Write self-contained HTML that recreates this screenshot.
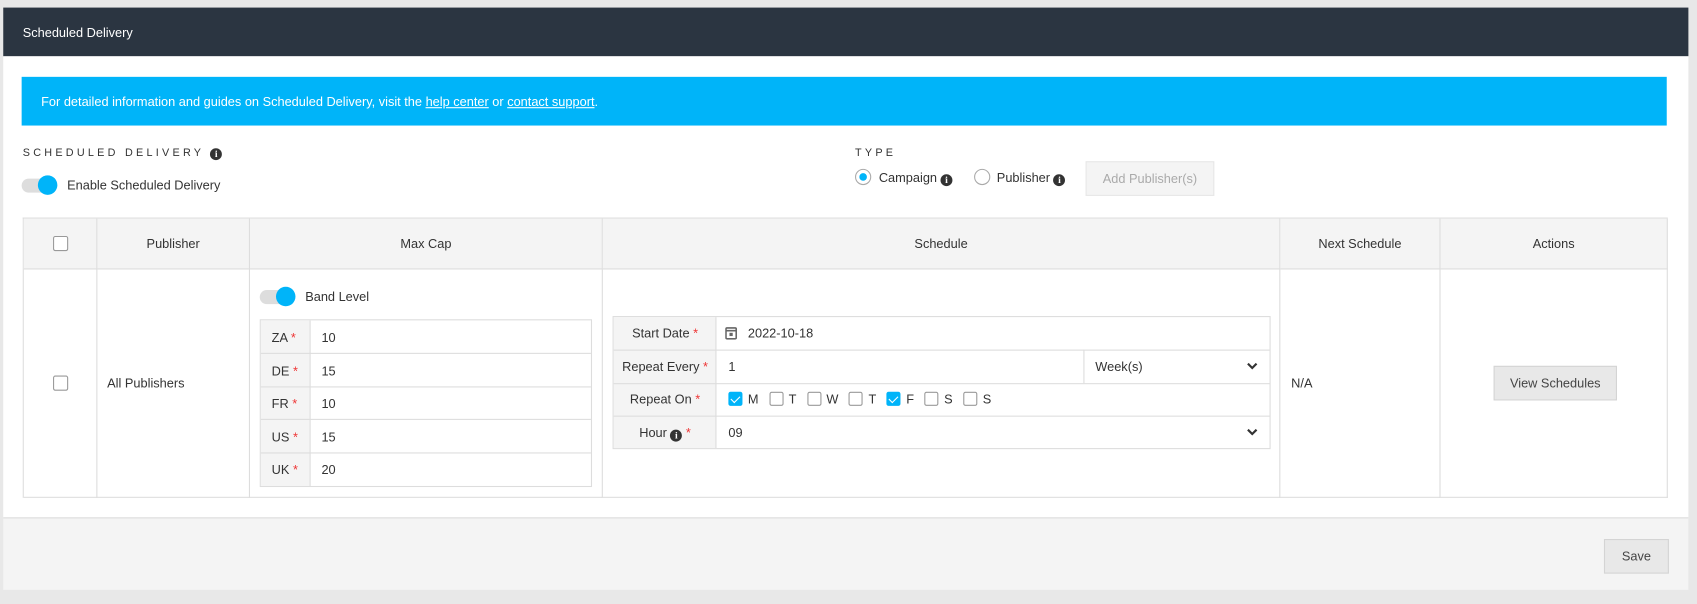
<!DOCTYPE html>
<html><head><style>
*{box-sizing:border-box;margin:0;padding:0}
body{width:1697px;height:604px;background:#e8e8e8;font-family:"Liberation Sans",sans-serif;font-size:11.8px;color:#333;position:relative;overflow:hidden}
#w{position:absolute;left:0;top:0;width:1568px;height:558px;transform:scale(1.0823);transform-origin:0 0}
.a{position:absolute}
.hdr{left:3px;top:6.5px;width:1557px;height:45.5px;background:#2b3541;color:#fff;padding:16px 18px}
.body{left:3px;top:52px;width:1557px;height:426px;background:#fff}
.foot{left:3px;top:478px;width:1557px;height:67px;background:#f4f4f4;border-top:1px solid #ddd}
.info{left:20px;top:71px;width:1520px;height:45px;background:#00b4f9;color:#fff;padding:16px 18px}
.info u{color:#fff}
.lbl{font-size:10px;letter-spacing:3px;color:#333}
.i{display:inline-block;width:11px;height:11px;border-radius:50%;background:#333;color:#fff;font-size:9px;font-weight:bold;text-align:center;line-height:11px;font-family:"Liberation Serif",serif;vertical-align:-1px;letter-spacing:0}
.tog{width:34px;height:18px}
.tog .tr{position:absolute;left:0;top:3px;width:30px;height:13px;border-radius:7px;background:#ddd}
.tog .kn{position:absolute;left:15px;top:0;width:18px;height:18px;border-radius:50%;background:#00b4f9}
.cb{width:14px;height:14px;border:1px solid #999;border-radius:2px;background:#fff}
.cell{border-right:1px solid #ddd;border-bottom:1px solid #ddd;display:flex;align-items:center;justify-content:center}
.hd{background:#f4f4f4}
.req{color:#e33}
.btn{background:#e8e8e8;border:1px solid #d4d4d4;display:flex;align-items:center;justify-content:center;color:#444}
.chk{display:inline-block;width:13px;height:13px;border:1px solid #999;border-radius:2px;vertical-align:-2px;margin-right:5px;position:relative}
.chk.on{background:#00b4f9;border-color:#00b4f9}
.chk.on:after{content:"";position:absolute;left:3px;top:1px;width:4px;height:7px;border:solid #fff;border-width:0 1.5px 1.5px 0;transform:rotate(45deg)}
</style></head><body>
<div id="w">
<div class="a hdr">Scheduled Delivery</div>
<div class="a body"></div>
<div class="a foot"></div>
<div class="a info">For detailed information and guides on Scheduled Delivery, visit the <u>help center</u> or <u>contact support</u>.</div>

<div class="a lbl" style="left:21px;top:136px">SCHEDULED DELIVERY <span class="i">i</span></div>
<div class="a tog" style="left:20px;top:162px"><div class="tr"></div><div class="kn"></div></div>
<div class="a" style="left:62px;top:164px">Enable Scheduled Delivery</div>

<div class="a lbl" style="left:790px;top:136px">TYPE</div>
<div class="a" style="left:790px;top:156px;width:15px;height:15px;border:1px solid #aaa;border-radius:50%"><div style="margin:3px;width:7px;height:7px;border-radius:50%;background:#00b4f9"></div></div>
<div class="a" style="left:812px;top:157px">Campaign <span class="i">i</span></div>
<div class="a" style="left:900px;top:156px;width:15px;height:15px;border:1px solid #aaa;border-radius:50%"></div>
<div class="a" style="left:921px;top:157px">Publisher <span class="i">i</span></div>
<div class="a btn" style="left:1003px;top:149px;width:119px;height:32px;background:#f4f4f4;border-color:#e6e6e6;color:#aaa">Add Publisher(s)</div>

<div class="a" style="left:21px;top:201px;width:1520px;height:259px;border-left:1px solid #ddd;border-top:1px solid #ddd"></div>
<div class="a cell hd" style="left:22px;top:202px;width:68px;height:47px"><div class="cb"></div></div>
<div class="a cell hd" style="left:90px;top:202px;width:141px;height:47px">Publisher</div>
<div class="a cell hd" style="left:231px;top:202px;width:326px;height:47px">Max Cap</div>
<div class="a cell hd" style="left:557px;top:202px;width:626px;height:47px">Schedule</div>
<div class="a cell hd" style="left:1183px;top:202px;width:148px;height:47px">Next Schedule</div>
<div class="a cell hd" style="left:1331px;top:202px;width:210px;height:47px">Actions</div>
<div class="a cell" style="left:22px;top:249px;width:68px;height:211px"><div class="cb"></div></div>
<div class="a cell" style="left:90px;top:249px;width:141px;height:211px;justify-content:flex-start;padding-left:9px">All Publishers</div>
<div class="a cell" style="left:231px;top:249px;width:326px;height:211px"></div>
<div class="a cell" style="left:557px;top:249px;width:626px;height:211px"></div>
<div class="a cell" style="left:1183px;top:249px;width:148px;height:211px;justify-content:flex-start;padding-left:10px">N/A</div>
<div class="a cell" style="left:1331px;top:249px;width:210px;height:211px"></div>
<div class="a btn" style="left:1380px;top:338px;width:114px;height:32px">View Schedules</div>

<div class="a tog" style="left:240px;top:265px"><div class="tr"></div><div class="kn"></div></div>
<div class="a" style="left:282px;top:267px">Band Level</div>

<div class="a" style="left:240px;top:295px;width:307px;height:155px;border:1px solid #ddd">
<div style="position:absolute;left:0;top:0;width:46px;height:153px;background:#f4f4f4;border-right:1px solid #ddd"></div>
<div style="position:absolute;left:0;top:30px;width:305px;border-top:1px solid #ddd"></div>
<div style="position:absolute;left:0;top:61px;width:305px;border-top:1px solid #ddd"></div>
<div style="position:absolute;left:0;top:91px;width:305px;border-top:1px solid #ddd"></div>
<div style="position:absolute;left:0;top:122px;width:305px;border-top:1px solid #ddd"></div>
<div style="position:absolute;left:10px;top:9px">ZA <span class="req">*</span></div>
<div style="position:absolute;left:10px;top:40px">DE <span class="req">*</span></div>
<div style="position:absolute;left:10px;top:70px">FR <span class="req">*</span></div>
<div style="position:absolute;left:10px;top:101px">US <span class="req">*</span></div>
<div style="position:absolute;left:10px;top:131px">UK <span class="req">*</span></div>
<div style="position:absolute;left:56px;top:9px">10</div>
<div style="position:absolute;left:56px;top:40px">15</div>
<div style="position:absolute;left:56px;top:70px">10</div>
<div style="position:absolute;left:56px;top:101px">15</div>
<div style="position:absolute;left:56px;top:131px">20</div>
</div>

<div class="a" style="left:566px;top:292px;width:608px;height:123px;border:1px solid #ddd">
<div style="position:absolute;left:0;top:0;width:95px;height:121px;background:#f4f4f4;border-right:1px solid #ddd"></div>
<div style="position:absolute;left:0;top:30px;width:606px;border-top:1px solid #ddd"></div>
<div style="position:absolute;left:0;top:61px;width:606px;border-top:1px solid #ddd"></div>
<div style="position:absolute;left:0;top:91px;width:606px;border-top:1px solid #ddd"></div>
<div style="position:absolute;left:434px;top:30px;height:31px;border-left:1px solid #ddd"></div>
<div style="position:absolute;left:0;width:95px;text-align:center;top:8px">Start Date <span class="req">*</span></div>
<div style="position:absolute;left:0;width:95px;text-align:center;top:39px">Repeat Every <span class="req">*</span></div>
<div style="position:absolute;left:0;width:95px;text-align:center;top:69px">Repeat On <span class="req">*</span></div>
<div style="position:absolute;left:0;width:95px;text-align:center;top:100px">Hour <span class="i">i</span> <span class="req">*</span></div>
<svg style="position:absolute;left:103px;top:8px" width="11" height="13" viewBox="0 0 11 13"><rect x="0.75" y="2" width="9.5" height="10" rx="1" fill="none" stroke="#666" stroke-width="1.5"/><line x1="0.75" y1="4.5" x2="10.25" y2="4.5" stroke="#666" stroke-width="1.5"/><rect x="4" y="6.5" width="3" height="3" fill="#666"/></svg>
<div style="position:absolute;left:124px;top:8px">2022-10-18</div>
<div style="position:absolute;left:106px;top:39px">1</div>
<div style="position:absolute;left:445px;top:39px">Week(s)</div>
<svg style="position:absolute;left:585px;top:41px" width="10" height="8" viewBox="0 0 10 8"><path d="M1 2 L5 6 L9 2" fill="none" stroke="#333" stroke-width="2"/></svg>
<div style="position:absolute;left:106px;top:69px"><span class="chk on"></span>M &nbsp;&nbsp;<span class="chk"></span>T &nbsp;&nbsp;<span class="chk"></span>W &nbsp;&nbsp;<span class="chk"></span>T &nbsp;&nbsp;<span class="chk on"></span>F &nbsp;&nbsp;<span class="chk"></span>S &nbsp;&nbsp;<span class="chk"></span>S</div>
<div style="position:absolute;left:106px;top:100px">09</div>
<svg style="position:absolute;left:585px;top:102px" width="10" height="8" viewBox="0 0 10 8"><path d="M1 2 L5 6 L9 2" fill="none" stroke="#333" stroke-width="2"/></svg>
</div>

<div class="a btn" style="left:1482px;top:498px;width:60px;height:32px">Save</div>
</div>
</body></html>
